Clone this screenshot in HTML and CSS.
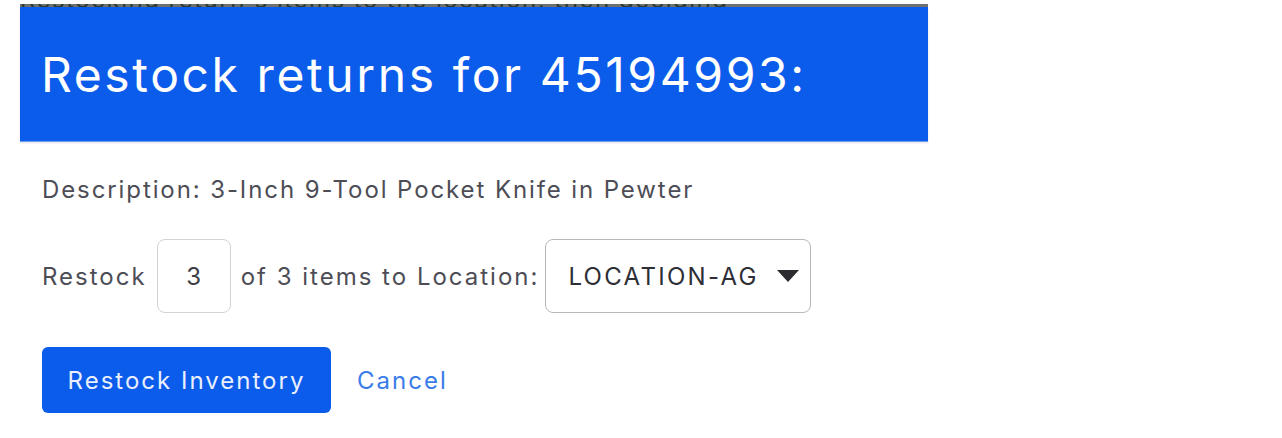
FILE: index.html
```html
<!DOCTYPE html>
<html>
<head>
<meta charset="utf-8">
<link rel="stylesheet" href="styles.css">
</head>
<body>
<div class="modal">
  <div class="underlay"><span class="underlay-text">Restocking return's items to the location, then deciding</span></div>
  <div class="header"><h1 class="title">Restock returns for 45194993:</h1></div>
  <div class="body">
    <p class="desc">Description: 3-Inch 9-Tool Pocket Knife in Pewter</p>
    <div class="row">
      <span>Restock</span>
      <div class="qty">3</div>
      <span>of 3 items to Location:</span>
      <div class="select">
        <span class="select-value">LOCATION-AG</span>
        <svg class="caret" width="22" height="12" viewBox="0 0 22 12"><path d="M0 0H22L11 12Z" fill="#2b2b30"/></svg>
      </div>
    </div>
    <div class="actions">
      <button class="btn">Restock Inventory</button>
      <a class="cancel" href="#">Cancel</a>
    </div>
  </div>
</div>
</body>
</html>
```

FILE: styles.css
```css
html, body {
  margin: 0;
  padding: 0;
  background: #ffffff;
  font-family: Inter, "Noto Sans", sans-serif;
}
.modal {
  margin-left: 20px;
  width: 908px;
  padding-top: 4px;
}
.underlay {
  height: 3px;
  background: #6e716e;
  overflow: hidden;
  display: flex;
  align-items: flex-end;
}
.underlay-text {
  font-size: 24px;
  line-height: 30px;
  letter-spacing: 1.5px;
  color: #2d3a2d;
  flex: none;
  margin-bottom: -8px;
  white-space: nowrap;
}
.header {
  height: 134px;
  background: #0b5ceb;
  display: flex;
  align-items: center;
  padding-left: 21px;
  box-shadow: 0 1px 0 #6f9ef0, 0 2px 2px rgba(0,0,0,0.12);
}
.title {
  margin: 0;
  font-weight: 400;
  font-size: 48px;
  color: #ffffff;
  letter-spacing: 2.6px;
}
.body {
  padding: 31px 22px 0 22px;
  color: #4d4d56;
  font-size: 24px;
  letter-spacing: 1.9px;
}
.desc {
  margin: 0;
  line-height: 36px;
}
.row {
  margin-top: 31px;
  display: flex;
  align-items: center;
  height: 74px;
  letter-spacing: 2px;
}
.qty {
  margin: 0 10px;
  width: 74px;
  height: 74px;
  box-sizing: border-box;
  border: 1px solid #d3d3d6;
  border-radius: 8px;
  display: flex;
  align-items: center;
  justify-content: center;
  color: #3c3c44;
  letter-spacing: 0;
}
.select {
  margin-left: 6px;
  width: 266px;
  height: 74px;
  box-sizing: border-box;
  border: 1px solid #b9b9bd;
  border-radius: 8px;
  display: flex;
  align-items: center;
  justify-content: space-between;
  padding: 0 11px 0 22px;
  color: #2e2e35;
}
.select-value {
  letter-spacing: 2.3px;
}
.caret {
  display: block;
}
.actions {
  margin-top: 34px;
  display: flex;
  align-items: center;
  gap: 26px;
}
.btn {
  height: 66px;
  width: 289px;
  border: none;
  border-radius: 6px;
  background: #0b5ceb;
  color: #e9effc;
  font-family: Inter, "Noto Sans", sans-serif;
  font-size: 24px;
  letter-spacing: 2px;
  padding: 0;
}
.cancel {
  color: #3a7ce8;
  text-decoration: none;
  font-size: 24px;
  letter-spacing: 2px;
}
```
